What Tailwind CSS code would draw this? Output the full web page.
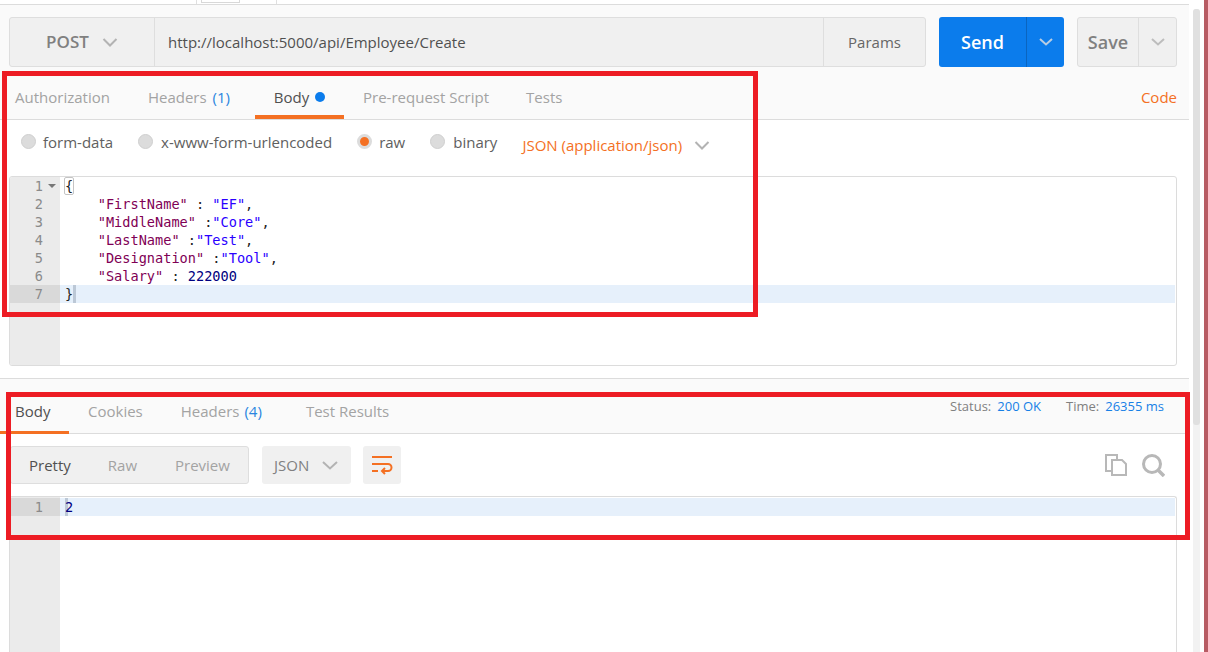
<!DOCTYPE html>
<html lang="en">
<head>
  <meta charset="UTF-8">
  <title>Postman</title>
  <script src="https://cdn.jsdelivr.net/npm/@tailwindcss/browser@4"></script>
</head>
<body class="relative w-[1208px] h-[652px] overflow-hidden bg-white font-['Open_Sans',sans-serif] flex">
  <main class="w-[1189px] h-[652px] shrink-0 flex flex-col">
    <!-- cut off tab strip -->
    <div class="h-[5px] border-b border-[#dcdcdc] bg-white flex items-start text-[0px] shrink-0">
      <div class="ml-[196px] w-[1px] h-[4px] bg-[#e0e0e0]"></div>
      <div class="ml-[4px] w-[39px] h-[3px] border-x border-b border-[#d8d8d8]"></div>
      <div class="ml-[36px] w-[1px] h-[4px] bg-[#e0e0e0]"></div>
    </div>

    <!-- request section -->
    <section class="bg-[#fafafa] h-[115px] border-b border-[#dcdcdc] flex flex-col shrink-0">
      <div class="flex items-start pl-[9px] pt-[12px] h-[62px]">
        <div class="flex w-[917px] h-[50px] bg-[#f0f0f0] border border-[#dedede] rounded-[3px]">
          <div class="w-[145px] flex items-center justify-center gap-[13px] border-r border-[#dedede] text-[#808080] text-[17px] font-semibold">
            <span>POST</span>
            <svg width="16" height="9" viewBox="0 0 16 9" fill="none" stroke="#b3b3b3" stroke-width="2"><path d="M1.5 1l6.5 6.5L14.5 1"/></svg>
          </div>
          <div class="flex-1 flex items-center pl-[13px] text-[15px] text-[#505050]">http://localhost:5000/api/Employee/Create</div>
          <div class="w-[102px] flex items-center justify-center border-l border-[#dedede] text-[15px] text-[#666]">Params</div>
        </div>
        <div class="ml-[13px] flex w-[125px] h-[50px] bg-[#0b7cec] rounded-[3px] text-white">
          <div class="w-[88px] flex items-center justify-center text-[18px] font-semibold border-r border-[#0a65c0]">Send</div>
          <div class="flex-1 flex items-center justify-center">
            <svg width="14" height="8" viewBox="0 0 14 8" fill="none" stroke="#b9cde2" stroke-width="2"><path d="M1 1l6 5.5L13 1"/></svg>
          </div>
        </div>
        <div class="ml-[13px] flex w-[100px] h-[50px] bg-[#f0f0f0] border border-[#dedede] rounded-[3px]">
          <div class="w-[61px] flex items-center justify-center text-[18px] font-semibold text-[#808080] border-r border-[#dedede]">Save</div>
          <div class="flex-1 flex items-center justify-center">
            <svg width="14" height="8" viewBox="0 0 14 8" fill="none" stroke="#bdbdbd" stroke-width="2"><path d="M1 1l6 5.5L13 1"/></svg>
          </div>
        </div>
      </div>
      <div class="flex-1 flex items-stretch text-[15px] text-[#a3a3a3] pl-[15px] pr-[12px]">
        <div class="flex items-center mr-[38px] pt-[8px]">Authorization</div>
        <div class="flex items-center mr-[25px] pt-[8px]">Headers<span class="ml-[6px] text-[#2a85e0]">(1)</span></div>
        <div class="flex items-center w-[89px] justify-center pt-[8px] text-[#505050] mr-[19px] border-b-[4px] border-[#f47023] pb-0 box-border">
          <span class="-mb-[4px] flex items-center">Body<span class="ml-[6px] w-[10px] h-[10px] rounded-full bg-[#0b7cec]"></span></span>
        </div>
        <div class="flex items-center mr-[37px] pt-[8px]">Pre-request Script</div>
        <div class="flex items-center pt-[8px]">Tests</div>
        <div class="ml-auto flex items-center pt-[8px] text-[#f47023]">Code</div>
      </div>
    </section>

    <!-- body type radios -->
    <div class="h-[56px] shrink-0 flex items-start pl-[21px] text-[15px] text-[#606060]">
      <label class="flex items-center h-[45px] mr-[25px]"><span class="w-[15px] h-[15px] rounded-full bg-[#dcdcdc] border border-[#cfcfcf] mr-[7px] -mt-[3px]"></span>form-data</label>
      <label class="flex items-center h-[45px] mr-[25px]"><span class="w-[15px] h-[15px] rounded-full bg-[#dcdcdc] border border-[#cfcfcf] mr-[8px] -mt-[3px]"></span>x-www-form-urlencoded</label>
      <label class="flex items-center h-[45px] mr-[25px]"><span class="w-[15px] h-[15px] rounded-full bg-[#f47023] border-[3px] border-[#dcdcdc] mr-[7px] -mt-[3px]"></span>raw</label>
      <label class="flex items-center h-[45px] mr-[25px]"><span class="w-[15px] h-[15px] rounded-full bg-[#dcdcdc] border border-[#cfcfcf] mr-[8px] -mt-[3px]"></span>binary</label>
      <div class="flex items-center h-[51px] text-[#f47023] gap-[12px]">
        <span>JSON (application/json)</span>
        <svg width="16" height="9" viewBox="0 0 16 9" fill="none" stroke="#b3b3b3" stroke-width="2"><path d="M1.5 1l6.5 6.5L14.5 1"/></svg>
      </div>
    </div>

    <!-- request editor -->
    <div class="ml-[9px] w-[1168px] h-[190px] shrink-0 border border-[#dcdcdc] rounded-[3px] overflow-hidden flex font-['DejaVu_Sans_Mono',monospace] text-[13.6px] leading-[18px]">
      <div class="w-[50px] bg-[#ebebeb] text-[#8a8a8a] text-right">
        <div class="h-[18px] pr-[17px] relative">1<span class="absolute right-[4px] top-[7px] w-0 h-0 border-x-[4px] border-x-transparent border-t-[4px] border-t-[#777]"></span></div>
        <div class="h-[18px] pr-[17px]">2</div>
        <div class="h-[18px] pr-[17px]">3</div>
        <div class="h-[18px] pr-[17px]">4</div>
        <div class="h-[18px] pr-[17px]">5</div>
        <div class="h-[18px] pr-[17px]">6</div>
        <div class="h-[18px] pr-[17px] bg-[#d9d9d9]">7</div>
      </div>
      <div class="flex-1 text-[#222] pr-[1px]">
        <div class="h-[18px] pl-[5px] whitespace-pre"><span class="border border-[#c4c4c4] rounded-[2px] -mx-[1px]">{</span></div>
        <div class="h-[18px] pl-[5px] whitespace-pre">    <span class="text-[#7f0055]">"FirstName"</span> : <span class="text-[#2a00ff]">"EF"</span>,</div>
        <div class="h-[18px] pl-[5px] whitespace-pre">    <span class="text-[#7f0055]">"MiddleName"</span> :<span class="text-[#2a00ff]">"Core"</span>,</div>
        <div class="h-[18px] pl-[5px] whitespace-pre">    <span class="text-[#7f0055]">"LastName"</span> :<span class="text-[#2a00ff]">"Test"</span>,</div>
        <div class="h-[18px] pl-[5px] whitespace-pre">    <span class="text-[#7f0055]">"Designation"</span> :<span class="text-[#2a00ff]">"Tool"</span>,</div>
        <div class="h-[18px] pl-[5px] whitespace-pre">    <span class="text-[#7f0055]">"Salary"</span> : <span class="text-[#000080]">222000</span></div>
        <div class="h-[18px] pl-[5px] whitespace-pre bg-[#e6f0fb]">}<span class="inline-block w-[3px] h-[18px] align-top bg-[#bcc8d6]"></span></div>
      </div>
    </div>

    <!-- response section -->
    <section class="mt-[12px] h-[56px] shrink-0 bg-[#fafafa] border-y border-[#dcdcdc] flex items-stretch text-[15px] text-[#a3a3a3]">
      <div class="w-[69px] pl-[15px] pt-[21px] text-[#505050] border-b-[3px] border-[#f47023] -mb-[1px]">Body</div>
      <div class="pl-[19px] pt-[21px] mr-[38px]">Cookies</div>
      <div class="pt-[21px] mr-[44px]">Headers<span class="ml-[5px] text-[#2a85e0]">(4)</span></div>
      <div class="pt-[21px]">Test Results</div>
      <div class="ml-auto flex gap-[25px] pr-[25px] pt-[18px] text-[13px] text-[#808080]">
        <span>Status:<span class="ml-[6px] text-[#1780e6]">200 OK</span></span>
        <span>Time:<span class="ml-[6px] text-[#1780e6]">26355 ms</span></span>
      </div>
    </section>

    <!-- response toolbar -->
    <div class="h-[62px] shrink-0 flex items-start pt-[12px] pl-[10px] text-[15px]">
      <div class="flex items-center w-[239px] h-[38px] bg-[#f0f0f0] border border-[#dedede] rounded-[3px] text-[#a3a3a3]">
        <span class="ml-[18px] text-[#505050]">Pretty</span>
        <span class="ml-[37px]">Raw</span>
        <span class="ml-[38px]">Preview</span>
      </div>
      <div class="ml-[13px] w-[89px] h-[38px] bg-[#f0f0f0] rounded-[3px] flex items-center pl-[12px] gap-[13px] text-[#808080]">
        <span>JSON</span>
        <svg width="16" height="9" viewBox="0 0 16 9" fill="none" stroke="#b3b3b3" stroke-width="2"><path d="M1 1l7 6.5L15 1"/></svg>
      </div>
      <div class="ml-[12px] w-[38px] h-[38px] bg-[#f0f0f0] rounded-[3px] flex items-center justify-center">
        <svg width="22" height="20" viewBox="0 0 22 20" fill="none" stroke="#f47023" stroke-width="2"><path d="M1 2h20M1 9h16a3.5 3.5 0 0 1 0 7h-5M1 16h6"/><path d="M14 13l-3 3 3 3" /></svg>
      </div>
      <div class="ml-auto mr-[24px] flex items-center h-[38px] gap-[15px]">
        <svg width="22" height="22" viewBox="0 0 22 22" fill="none" stroke="#b8b8b8" stroke-width="2"><path d="M7 17H1V1h11v5"/><path d="M7 6h10l4 4v11H7z"/></svg>
        <svg width="23" height="23" viewBox="0 0 23 23" fill="none" stroke="#b8b8b8"><circle cx="10" cy="10" r="8.5" stroke-width="3"/><path d="M16 16l6 6" stroke-width="3.5"/></svg>
      </div>
    </div>

    <!-- response editor -->
    <div class="ml-[9px] w-[1168px] flex-1 border-x border-t border-[#dcdcdc] rounded-t-[3px] flex font-['DejaVu_Sans_Mono',monospace] text-[13.6px] leading-[18px] pt-[1px]">
      <div class="w-[50px] bg-[#ebebeb] text-[#8a8a8a] text-right -mt-[1px] pt-[1px]">
        <div class="h-[18px] pr-[17px] bg-[#d9d9d9]">1</div>
      </div>
      <div class="flex-1 pr-[1px]">
        <div class="h-[18px] pl-[5px] bg-[#e6f0fb] text-[#000080]"><span class="bg-[#bcc8d6] inline-block w-[3px] h-[18px] -mr-[3px] align-top"></span>2</div>
      </div>
    </div>
  </main>

  <!-- window scrollbar -->
  <div class="w-[19px] h-[652px] shrink-0 pl-[4px] pt-[9px] flex">
    <div class="w-[7px] h-full bg-[#f2f2f2] rounded-t-[3px]">
      <div class="h-[416px] bg-[#e0e0e0] rounded-[3px]"></div>
    </div>
  </div>
  <div class="absolute right-0 top-0 w-[4px] h-[652px] bg-[#b85c64]"></div>

  <!-- red annotations -->
  <div class="absolute left-[2px] top-[71px] w-[756px] h-[246px] border-[5px] border-[#ed1c24]"></div>
  <div class="absolute left-[6px] top-[392px] w-[1184px] h-[148px] border-[5px] border-[#ed1c24]"></div>
</body>
</html>
